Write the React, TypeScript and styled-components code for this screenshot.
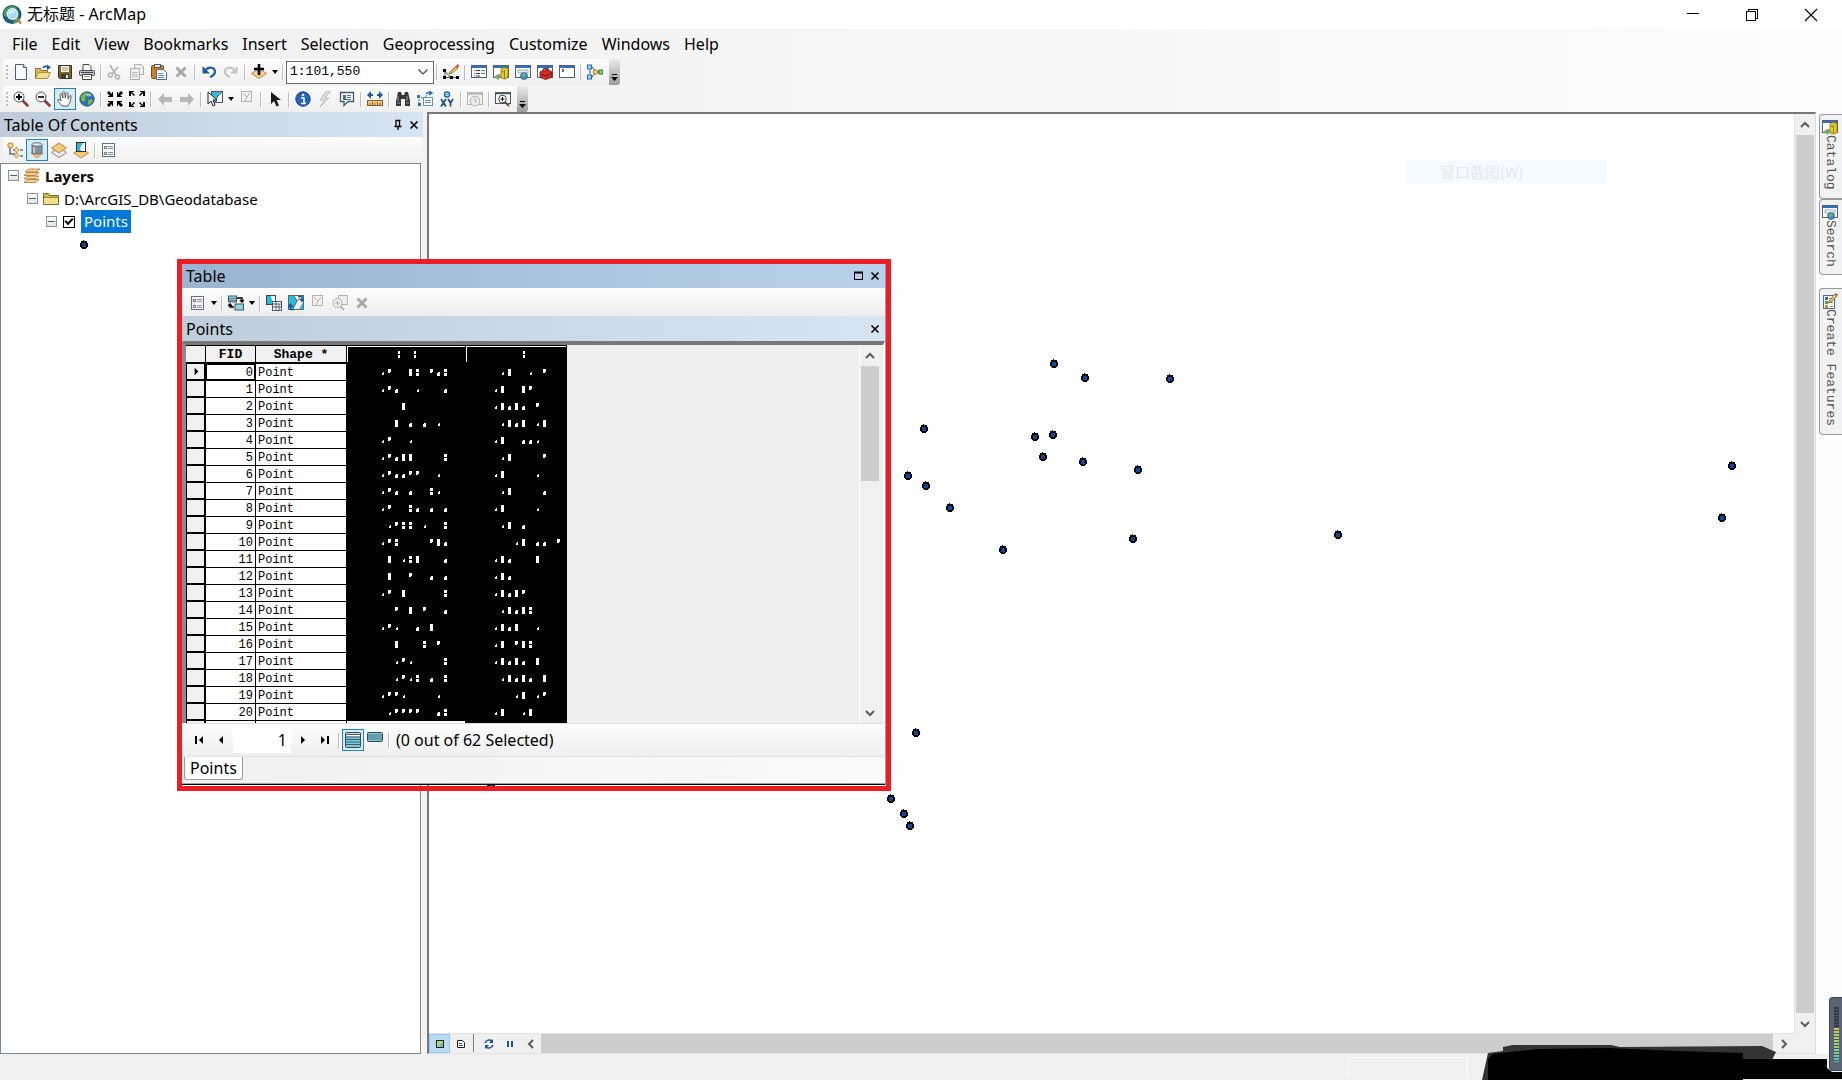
import React from 'react';
import styled, { createGlobalStyle, css } from 'styled-components';

const ui = '"Noto Sans", "Noto Sans CJK SC", sans-serif';
const mono = '"Liberation Mono", "Noto Sans CJK SC", monospace';

const GlobalStyle = createGlobalStyle`
  *, *::before, *::after { box-sizing: border-box; }
  body { margin: 0; font: 16px/20px ${ui}; color: #000; background: #f0f0f0; }
  button, input, select { font: inherit; color: inherit; margin: 0; padding: 0; border: 0; border-radius: 0; background: none; }
  svg { display: block; flex: none; }
`;

/* ---------- icons ---------- */

const windowFrame = (
  <>
    <rect x="0.5" y="1.5" width="15" height="12" fill="#fff" stroke="#56616d" />
    <rect x="1" y="2" width="14" height="2" fill="#2f6fc4" />
  </>
);
const cylinderCatalog = (
  <>
    {windowFrame}
    <path d="M8 5l3-1.500 4 1v9l-3 1.500-4-1z" fill="#e8cd24" stroke="#8a7410" strokeWidth=".8" />
    <path d="M11.500 6v9M9 7.500l2 .5" stroke="#8a7410" strokeWidth=".9" />
    <path d="M2 12.500l4-2.500 3 2-4 3.500z" fill="#5fa3c4" stroke="#c0a818" />
  </>
);
const searchWindow = (
  <>
    {windowFrame}
    <rect x="3" y="6" width="10" height="3" fill="#e8eef5" stroke="#8ba0b8" strokeWidth=".8" />
    <circle cx="9" cy="12" r="3.600" fill="#3e86cc" stroke="#35608c" strokeWidth=".6" />
    <path d="M7 11c1-2 3-2 4-1l-1 2-2 1-1 2z" fill="#6cbb52" />
  </>
);
const globe = (
  <>
    <circle cx="8" cy="8" r="7.200" fill="#2c6fb2" stroke="#174d80" strokeWidth=".8" />
    <path d="M2 6c2-5 6-5 8-4l-2 3-2 1 1 3-3 2-2-2zM9 9l4-1 1 2-3 4-2-1z" fill="#78b843" />
    <ellipse cx="10" cy="4" rx="2.500" ry="1.500" fill="#b9dbf3" opacity=".7" />
  </>
);
const diamond = (y: number, fill: string) => (
  <path d={`M0.500 ${y}L8 ${y - 5}L15.500 ${y}L8 ${y + 5}Z`} fill={fill} stroke="#b57f34" strokeWidth=".9" />
);
const magnifier = (sign: React.ReactNode) => (
  <>
    <path d="M9.500 9.500L14.500 14.500" stroke="#8d3b2c" strokeWidth="2.600" strokeLinecap="round" />
    <circle cx="6" cy="6" r="5" fill="#fbfbfb" stroke="#50565c" />
    {sign}
  </>
);

const icons: Record<string, React.ReactNode> = {
  new: <><path d="M2.500.5h8l3 3v12h-11z" fill="#f8fbff" stroke="#4c5d70" /><path d="M10.500.5v3h3" fill="#dbe6f2" stroke="#4c5d70" /></>,
  open: <><path d="M.5 13.500v-9h5l1 2h6v7z" fill="#d6b95c" stroke="#8c7430" /><path d="M.5 14.500l3-6h12l-3 6z" fill="#f4de91" stroke="#a98e40" /><path d="M8 4c1-2 3-2 5-1" fill="none" stroke="#1f5d9c" strokeWidth="1.600" /><path d="M12 .5l4 3-4 2.500z" fill="#1f5d9c" /></>,
  save: <><path d="M1.500 1.500h13v13h-12l-1-1z" fill="#7a662e" stroke="#3e3518" /><rect x="4" y="2" width="8" height="6" fill="#f2f0e8" /><path d="M5 4h6M5 6h6" stroke="#a09c8c" /><rect x="4" y="10" width="8" height="4" fill="#3a3a3a" /><rect x="9" y="11" width="2" height="3" fill="#eee" /></>,
  print: <><path d="M4 6V.5h6l2 2V6" fill="#fff" stroke="#444" /><rect x=".5" y="6.500" width="15" height="5" rx="1" fill="#c2c5c8" stroke="#4a4a4a" /><path d="M2 8.500h12" stroke="#46494c" /><path d="M3.500 10.500h9v5h-9z" fill="#fff" stroke="#444" /><path d="M5 12.500h6" stroke="#999" /></>,
  cut: <><path d="M3 1l6 10M11 3L5 10" stroke="#b5b5b5" strokeWidth="1.800" /><circle cx="3.500" cy="11" r="2" fill="none" stroke="#b0b0b0" strokeWidth="1.500" /><circle cx="10.500" cy="13" r="2" fill="none" stroke="#b0b0b0" strokeWidth="1.500" /></>,
  copy: <><path d="M5.500.5h7l2 2v8h-9z" fill="#f2f2f2" stroke="#adadad" /><path d="M1.500 4.500h7l2 2v9h-9z" fill="#f2f2f2" stroke="#adadad" /><path d="M3 8.500h6M3 10.500h6M3 12.500h6M8 4.500h4" stroke="#bbb" /></>,
  paste: <><rect x=".5" y="1.500" width="12" height="13" rx="1" fill="#c9812c" stroke="#7d4c16" /><rect x="3.500" y=".5" width="6" height="3" fill="#e8e8e8" stroke="#555" /><path d="M5.500 5.500h7l3 3v7h-10z" fill="#fff" stroke="#516983" /><path d="M7 9.500h5M7 11.500h6M7 13.500h6" stroke="#529abc" /></>,
  delete: <path d="M3.500 3.500l9 9M12.500 3.500l-9 9" stroke="#a8a8a8" strokeWidth="3" />,
  undo: <><path d="M4 7c3-5 10-4 10 1 0 3-3 4-5 5" fill="none" stroke="#1c5c9a" strokeWidth="2.200" /><path d="M1.500 2v7.500H9z" fill="#1c5c9a" /></>,
  redo: <><path d="M12 7C9 2 2 3 2 8c0 3 3 4 5 5" fill="none" stroke="#c6c6c6" strokeWidth="2.200" /><path d="M14.500 2v7.500H7z" fill="#c6c6c6" /></>,
  add: <>{diamond(9.500, '#f4cf87')}<path d="M8 0v11M3 5h10" stroke="#000" strokeWidth="2.600" /></>,
  edit: <><path d="M2 6v8M2 13.500h13M2 7l5 6" stroke="#555" fill="none" /><path d="M0 5h3v3H0zM0 12h3v3H0zM7 12h3v3H7zM13 12h3v3h-3z" fill="#000" /><path d="M7 8l6-6 2 2-6 5-3 1z" fill="#eebd57" stroke="#7d5c24" strokeWidth=".8" /><path d="M13 2l2-2 1 2-1 2z" fill="#c7423c" /></>,
  toc: <>{windowFrame}<path d="M3 6.500h1M3 9.500h1M3 12h1" stroke="#d33" /><path d="M5 6.500h4M5 9.500h4M5 12h4" stroke="#238" /><path d="M10 6.500h4M10 9.500h4" stroke="#29a6a6" /></>,
  catalog: cylinderCatalog,
  search: searchWindow,
  toolbox: <>{windowFrame}<path d="M3 8l7-3 5 3v5l-6 2.500-6-2z" fill="#d42a20" stroke="#7a1512" strokeWidth=".8" /><path d="M6 7V5l5-1v3M3.500 10l5.500 2 6-3" fill="none" stroke="#7a1512" /></>,
  python: <>{windowFrame}<path d="M3 5l2 1.500L3 8" fill="none" stroke="#000" /></>,
  model: <><path d="M3 6v4M5 3l4 5-4 5M8 8h4" fill="none" stroke="#444" /><rect x=".5" y="1" width="4" height="4" fill="#9fd3f5" stroke="#1e68aa" /><rect x=".5" y="11" width="4" height="4" fill="#9fd3f5" stroke="#1e68aa" /><circle cx="8.500" cy="8" r="2.200" fill="#f6db6c" stroke="#9c7d20" /><rect x="12" y="6" width="4" height="4" fill="#8cd17c" stroke="#2c7426" /></>,
  zoomIn: magnifier(<path d="M3 6h6M6 3v6" stroke="#000" strokeWidth="2" />),
  zoomOut: magnifier(<path d="M3 6h6" stroke="#333" strokeWidth="2" />),
  pan: <path d="M5 15l-4-5c-1-2 1-2 2-1l1 1-1-6c0-2 2-2 2 0l1 3-.2-5c0-2 2-2 2 0l.5 5 .7-4c.3-2 2-1.500 2 0v5l1.500-3c1-1 2 0 1.500 1L13 11l-2 4z" fill="#fff" stroke="#4e4e4e" strokeWidth=".9" />,
  globe,
  shrink: <path d="M1 1l1-1 3 3V1h1v5H1V5h2L0 2zM15 1l-1-1-3 3V1h-1v5h5V5h-2l3-3zM1 15l1 1 3-3v2h1v-5H1v1h2l-3 3zM15 15l-1 1-3-3v2h-1v-5h5v1h-2l3 3z" fill="#000" />,
  expand: <path d="M0 0h5v1H3l3 3-1 1-3-3v3H0zM16 0h-5v1h2l-3 3 1 1 3-3v3h2zM0 16h5v-1H3l3-3-1-1-3 3v-3H0zM16 16h-5v-1h2l-3-3 1-1 3 3v-3h2z" fill="#000" />,
  back: <path d="M1 8l6-6v4h8v5H7v4z" fill="#b9b9b9" />,
  forward: <path d="M15 8L9 2v4H1v5h8v4z" fill="#b9b9b9" />,
  selectFeat: <><rect x="4.500" y=".5" width="11" height="11" fill="#f4f4f4" stroke="#555" /><path d="M5 1h9l-5 6v4H5z" fill="#31b9de" /><path d="M9 11l1-5 5-5" fill="none" stroke="#555" /><path d="M1 1v12l3-3 2 5 2-1-2-5h4z" fill="#fff" stroke="#222" /></>,
  clearSel: <><rect x="2.500" y=".5" width="10" height="10" fill="#f1f1f1" stroke="#b4b4b4" /><path d="M4 2l4 4 3-4M8 6l-2 4" fill="none" stroke="#b4b4b4" /></>,
  arrow: <path d="M4 1v12l3-3 2.500 5.500 2.500-1L9.500 9H14z" fill="#1a1a1a" />,
  info: <><circle cx="8" cy="8" r="7.200" fill="#2464be" stroke="#153f7a" /><path d="M6 7h3v5M6 12.500h5" stroke="#fff" strokeWidth="1.500" fill="none" /><circle cx="8" cy="4" r="1.300" fill="#fff" /></>,
  bolt: <path d="M9 0L3 9h4l-4 7 9-9H8l6-7z" fill="#dcdcdc" stroke="#b5b5b5" strokeWidth=".8" />,
  popup: <><path d="M1.500 1.500h13v9H9l-4 4v-4H1.500z" fill="#fff" stroke="#47586b" strokeWidth="1.300" /><rect x="4" y="4" width="3" height="4" fill="#2e79bd" /><path d="M8 4.500h4M8 6.500h4M4 8.500h8" stroke="#47709c" /></>,
  measure: <><path d="M1 4h5M10 4h5" stroke="#1c5c9a" strokeWidth="2" /><path d="M4 0L0 4l4 4zM12 0l4 4-4 4z" fill="#1c5c9a" /><rect x=".5" y="9.500" width="15" height="5" fill="#f0cd7c" stroke="#8b5c28" /><path d="M3 12v2M5.500 11v3M8 12v2M10.500 11v3M13 12v2" stroke="#8b5c28" /></>,
  binoculars: <><path d="M3 1h3l1 3h2l1-3h3l2 9v5h-5V8H6v7H1v-5z" fill="#383838" /><path d="M3 5v5M12 5v5M2 12h3M11 12h3" stroke="#9a9a9a" /></>,
  route: <><path d="M2 13V6l5 2 4-6" fill="none" stroke="#2773b3" strokeDasharray="2 1" /><path d="M9 2h5M12 0l3 2-3 2" fill="none" stroke="#2773b3" strokeWidth="1.500" /><rect x="6.500" y="6.500" width="9" height="8" fill="#fff" stroke="#6a8fae" /><path d="M8 9.500h6M8 11.500h6" stroke="#6a8fae" /><path d="M0 4h3v3H0zM1 12h3v3H1z" fill="#2773b3" /></>,
  xy: <><circle cx="8" cy="3.500" r="2.500" fill="none" stroke="#1c6fb5" strokeWidth="1.600" /><circle cx="8" cy="3.500" r=".8" fill="#1c6fb5" /><path d="M2 8l5 7.500M7 8l-5 7.500M9 8l2.500 4V15.500M14 8l-2.500 4" fill="none" stroke="#174f88" strokeWidth="1.700" /></>,
  time: <><rect x=".5" y="1.500" width="15" height="12" fill="#f3f3f3" stroke="#b5b5b5" /><path d="M1 3h14" stroke="#c0c0c0" strokeWidth="2" /><circle cx="8" cy="10" r="4.800" fill="#ececec" stroke="#b0b0b0" /><path d="M8 7v3l2 1" fill="none" stroke="#a8a8a8" /></>,
  viewer: <><rect x=".5" y="1.500" width="15" height="11" fill="#fff" stroke="#4a5663" /><path d="M1 2.500h14" stroke="#4a5663" strokeWidth="1.500" /><path d="M9 10l5 5" stroke="#8d3b2c" strokeWidth="2" /><circle cx="7.500" cy="8" r="3.800" fill="#fff" stroke="#444" /><path d="M5.500 8h4M7.500 6v4" stroke="#000" /></>,
  drawingOrder: <><path d="M3 5v7h5M6 8h2M13 8h3M13 14h3" stroke="#4a779c" fill="none" strokeWidth="1.500" /><circle cx="3.500" cy="3.500" r="2.700" fill="#f3cf88" stroke="#b57f34" /><path d="M9.500 5l2.500 3-2.500 3L7 8zM9.500 11l2.500 2.500L9.500 16 7 13.500z" fill="#f3cf88" stroke="#b57f34" strokeWidth=".8" /></>,
  source: <><path d="M2 11h12l-6 5z" fill="#f1c777" stroke="#b57f34" strokeWidth=".8" /><path d="M3 2.500v8c0 2 10 2 10 0v-8z" fill="#87919d" stroke="#46566a" strokeWidth=".8" /><ellipse cx="8" cy="2.500" rx="5" ry="1.800" fill="#dde6ee" stroke="#46566a" strokeWidth=".8" /><path d="M5 5v6" stroke="#d7dde3" strokeWidth="1.500" /></>,
  visibility: <><path d="M.5 10.500L8 5.500l7.500 5L8 15.500z" fill="#eee" stroke="#777" strokeWidth=".9" />{diamond(6, '#f3c97c')}</>,
  selection: <><path d="M.5 11L8 6l7.500 5L8 16z" fill="#f3c97c" stroke="#b57f34" strokeWidth=".8" /><rect x="3.500" y=".5" width="9" height="9" fill="#fff" stroke="#333" /><path d="M4 1h6L7 6l1 3H4z" fill="#29b7df" /></>,
  list: <><rect x="1.500" y="1.500" width="12" height="13" fill="#fff" stroke="#5f7185" /><path d="M7 4.500h5M7 6.500h5M7 10.500h5M7 12.500h5" stroke="#8090a3" /><circle cx="4.500" cy="5.500" r="1.200" fill="none" stroke="#333" /><circle cx="4.500" cy="11.500" r="1.200" fill="none" stroke="#333" /></>,
  layers: <><path d="M0 14.500l4-3h11l-4 3z" fill="#f6d395" stroke="#a87531" strokeWidth=".8" /><path d="M0 11l4-3h11l-4 3z" fill="#f6d395" stroke="#a87531" strokeWidth=".8" /><path d="M0 7.500l4-3h11l-4 3z" fill="#f6d395" stroke="#a87531" strokeWidth=".8" /><path d="M1 4l4-3h11l-4 3z" fill="#f6d395" stroke="#a87531" strokeWidth=".8" /></>,
  folder: <><path d="M.5 13.500v-11h5l1 2h9v9z" fill="#cdb44c" stroke="#7d6c22" /><path d="M1 6.500h14v6.500H1z" fill="#f1e08c" /><path d="M1 6.500h14" stroke="#9c8a36" /></>,
  related: <><rect x=".5" y="1" width="8" height="6" fill="#8ad6e4" stroke="#45525e" /><path d="M1 3.500h7M1 5.500h7M7 11.500h8M7 13.500h8" stroke="#45525e" strokeWidth=".7" /><rect x="7" y="9" width="8.500" height="6" fill="#8ad6e4" stroke="#45525e" /><path d="M9 3h5v4M12 5l2 2 2-2M6 12H2V9M0 11l2-2 2 2" fill="none" stroke="#000" strokeWidth="1.400" /></>,
  selAttr: <><rect x=".5" y=".5" width="9" height="9" fill="#fff" stroke="#444" /><path d="M1 1h4l2 8H1z" fill="#23b8de" /><rect x="6.500" y="6.500" width="9" height="9" fill="#fff" stroke="#4e5a66" /><path d="M7 9h8M7 12h8M10 7v8M13 9v6" stroke="#4e5a66" /></>,
  switchSel: <><rect x=".5" y=".5" width="15" height="14" fill="#f1f1f1" stroke="#666" /><path d="M1 1h5l3 5-4 8H1zM15 7v7h-4z" fill="#24bde4" /><path d="M6 1l3 5 3-3M9 6l-4 8" fill="none" stroke="#666" /><path d="M10 1.500h4v4M12 4l2 2 2-2M6 14.500H2.500V10M0 12l2.500-2.500L5 12" fill="none" stroke="#17579a" strokeWidth="1.600" /></>,
  zoomSel: <><rect x="6.500" y=".5" width="9" height="9" fill="#eee" stroke="#b4b4b4" /><path d="M8 11l4 4" stroke="#b4b4b4" strokeWidth="2" /><circle cx="5.500" cy="8" r="4.500" fill="#f4f4f4" stroke="#acacac" /><path d="M3 8h5M5.500 5.500v5" stroke="#aaa" /></>,
  createFeat: <><rect x="1.500" y="2.500" width="11" height="13" fill="#fff" stroke="#4b6c8c" /><path d="M3 4h3v3H3z" fill="#2878bd" /><path d="M3 8h3v3H3z" fill="#5ba345" /><path d="M3 12h3v3H3z" fill="#d38a2a" /><path d="M7 5.500h3M8 9.500h3M8 13.500h3" stroke="#888" /><path d="M7 8l6-7 2 2-6 6-3 1z" fill="#f1c565" stroke="#7d5c24" strokeWidth=".8" /><path d="M13 1l1-1 2 2-1 1z" fill="#d3443e" /></>,
  showAll: <><rect x=".5" y=".5" width="15" height="15" rx="1" fill="#72cfe0" stroke="#444" /><path d="M1 3h14" stroke="#fff" strokeWidth="3" /><path d="M1 2.500h14M1 5h14M1 7.500h14M1 10h14M1 12.500h14" stroke="#4a5a62" /></>,
  showSel: <><rect x=".5" y=".5" width="15" height="9" rx="1" fill="#72cfe0" stroke="#444" /><path d="M1 3h14M1 5h14M1 7h14" stroke="#4a5a62" strokeWidth=".8" /></>,
  dataView: <><rect x="4.500" y="4.500" width="7" height="7" fill="#b6d87a" stroke="#222" /><path d="M7 11l1-3 3-1v4z" fill="#7fb5ae" /></>,
  layoutView: <><path d="M4.500 4.500h5l2 2v5h-7z" fill="#fff" stroke="#222" /><path d="M6 7h3v1H6zM6 9h4v1H6z" fill="#2a6cb0" /></>,
  refresh: <><path d="M4 7c1-3 5-4 7-2M12 9c-1 3-5 4-7 2" fill="none" stroke="#174f88" strokeWidth="1.500" /><path d="M12 3v4H8zM4 13V9h4z" fill="#174f88" /></>,
  pause: <path d="M5 5h2v6H5zM9 5h2v6H9z" fill="#16529c" />,
  first: <path d="M4 4h2v8H4zM12 4v8L8 8z" fill="#000" />,
  prev: <path d="M10 4v8L6 8z" fill="#000" />,
  next: <path d="M6 4v8l4-4z" fill="#000" />,
  last: <path d="M10 4h2v8h-2zM4 4v8l4-4z" fill="#000" />,
  pin: <path d="M5.500 3.500h5M6 3v6M9.500 3v6M4.500 9.500h7M8 9.500V13" stroke="#000" strokeWidth="1.300" fill="none" />,
  close: <path d="M4.500 4.500l7 7M11.500 4.500l-7 7" stroke="#000" strokeWidth="1.600" />,
  box: <><rect x="3.500" y="4.500" width="8" height="7" fill="none" stroke="#000" /><path d="M3 4.500h9" stroke="#000" strokeWidth="2" /></>,
  up: <path d="M4 10l4-4 4 4" fill="none" stroke="#5c5c5c" strokeWidth="2" />,
  down: <path d="M4 6l4 4 4-4" fill="none" stroke="#5c5c5c" strokeWidth="2" />,
  left: <path d="M10 4L6 8l4 4" fill="none" stroke="#5c5c5c" strokeWidth="2" />,
  right: <path d="M6 4l4 4-4 4" fill="none" stroke="#5c5c5c" strokeWidth="2" />,
  winMin: <path d="M2 6.500h12" stroke="#000" shapeRendering="crispEdges" />,
  winRestore: <path d="M2.500 4.500h9v9h-9zM4.500 4.500v-2h9v9h-2" fill="none" stroke="#000" shapeRendering="crispEdges" />,
  winClose: <path d="M2 2l12 12M14 2L2 14" stroke="#000" strokeWidth="1.100" />,
};

const Icon = ({ name, size = 16 }: { name: string; size?: number }) => (
  <svg width={size} height={size} viewBox="0 0 16 16" aria-hidden="true">{icons[name]}</svg>
);

/* ---------- shared parts ---------- */

const Tool = styled.button<{ $active?: boolean }>`
  width: 22px;
  height: 22px;
  flex: none;
  display: flex;
  align-items: center;
  justify-content: center;
  ${p => p.$active && css`
    background: #d9eaf8;
    box-shadow: inset 0 0 0 1px #1a84d8;
  `}
`;
const Divider = styled.span`
  width: 2px;
  height: 15px;
  margin: 0 2px;
  flex: none;
  border-left: 1px solid #bdbdbd;
  border-right: 1px solid #fff;
`;
const DropButton = styled.button`
  width: 10px;
  height: 22px;
  flex: none;
  display: flex;
  align-items: center;
  justify-content: center;
  &::before { content: ''; border: 3px solid transparent; border-top: 4px solid #000; border-bottom: 0; }
`;
const Grip = styled.span`
  width: 2px;
  height: 14px;
  margin: 0 2px 0 3px;
  flex: none;
  background: repeating-linear-gradient(#bdbdbd 0 2px, transparent 2px 4px);
`;

const Tools = ({ items, active }: { items: string[]; active?: string }) => (
  <>
    {items.map((item, i) =>
      item === '|' ? <Divider key={i} />
        : item === 'v' ? <DropButton key={i} aria-label="More options" />
          : <Tool key={i} $active={item === active} aria-label={item}><Icon name={item} /></Tool>
    )}
  </>
);

/* ---------- frame ---------- */

const Shell = styled.div`
  position: relative;
  height: 100vh;
  min-height: 640px;
  display: flex;
  flex-direction: column;
  overflow: hidden;
  background: linear-gradient(90deg, #f0f0f0, #fcfcfc);
`;
const TitleBar = styled.header`
  height: 29px;
  flex: none;
  display: flex;
  align-items: center;
  padding: 0 2px;
  background: #fff;
`;
const AppTitle = styled.h1`
  margin: 0 0 2px 5px;
  flex: 1;
  font: 400 16px/20px ${ui};
`;
const WindowButton = styled.button`
  width: 59px;
  height: 29px;
  display: flex;
  align-items: center;
  justify-content: center;
`;
const MenuBar = styled.nav`
  height: 30px;
  flex: none;
  display: flex;
  align-items: center;
  padding-left: 5px;
`;
const MenuItem = styled.button`
  padding: 0 7px;
  line-height: 24px;
`;
const ToolArea = styled.div`
  flex: none;
  display: flex;
  flex-direction: column;
  gap: 1px;
`;
const ToolStrip = styled.div`
  height: 26px;
  display: flex;
`;
const ToolGroup = styled.div`
  height: 26px;
  display: flex;
  align-items: center;
  margin-left: 3px;
  padding-right: 3px;
  border-radius: 3px 0 0 3px;
  background: linear-gradient(#fcfcfc, #efefef);
`;
const Overflow = styled.button`
  width: 11px;
  height: 26px;
  display: flex;
  align-items: flex-end;
  justify-content: center;
  padding-bottom: 3px;
  border-radius: 0 3px 3px 0;
  background: linear-gradient(#ececec, #9b9b9b);
`;
const ScaleField = styled.label`
  width: 148px;
  height: 23px;
  display: flex;
  align-items: center;
  padding-right: 4px;
  border: 1px solid #6e6e6e;
  background: #fff;
`;
const ScaleSelect = styled.select`
  appearance: none;
  flex: 1;
  min-width: 0;
  padding-left: 3px;
  font: 13px/20px ${mono};
  outline: 0;
`;
const Body = styled.div`
  flex: 1;
  min-height: 0;
  display: flex;
`;

/* ---------- contents panel ---------- */

const Contents = styled.aside`
  width: 423px;
  flex: none;
  display: flex;
  flex-direction: column;
`;
const CaptionBar = styled.div<{ $strong?: boolean; $flush?: boolean }>`
  height: ${p => (p.$strong ? 24 : 25)}px;
  flex: none;
  display: flex;
  align-items: center;
  padding: 0 ${p => (p.$flush ? 1 : 2)}px 0 4px;
  background: ${p => (p.$strong
    ? 'linear-gradient(90deg, #9ab4d1, #b9d1ea)'
    : 'linear-gradient(90deg, #bfcddb, #d7e4f2)')};
`;
const Caption = styled.h2`
  margin: 0;
  flex: 1;
  font: 400 16px/20px ${ui};
`;
const CaptionButton = styled.button`
  width: 16px;
  height: 16px;
`;
const PanelTools = styled.div`
  height: 26px;
  flex: none;
  display: flex;
  align-items: center;
  margin: 0 1px 0 3px;
  padding-left: 1px;
  background: linear-gradient(#fcfcfc, #efefef);
`;
const Tree = styled.ul`
  flex: 1;
  margin: 0 2px 0 0;
  padding: 0;
  list-style: none;
  border: 1px solid #828790;
  background: #fff;
`;
const TreeRow = styled.li<{ $level: number }>`
  height: 23px;
  display: flex;
  align-items: center;
  gap: 5px;
  padding-left: ${p => 7 + p.$level * 19}px;
  font-size: 15px;
  font-weight: ${p => (p.$level === 0 ? 700 : 400)};
`;
const Toggle = styled.button`
  width: 11px;
  height: 11px;
  flex: none;
  display: flex;
  align-items: center;
  justify-content: center;
  border: 1px solid #919191;
  background: linear-gradient(#fff, #e4e4e4);
  &::before { content: ''; width: 7px; height: 1px; background: #3f5fa8; }
`;
const Check = styled.input`
  appearance: none;
  width: 12px;
  height: 12px;
  margin: 0 1px;
  flex: none;
  display: flex;
  align-items: center;
  justify-content: center;
  border: 1px solid #000;
  background: #fff;
  &:checked::before {
    content: '';
    width: 8px;
    height: 5px;
    margin-bottom: 2px;
    border: solid #000;
    border-width: 0 0 2px 2px;
    transform: rotate(-45deg);
  }
`;
const LayerName = styled.label`
  padding: 0 3px;
  line-height: 23px;
  color: #fff;
  background: #0078d7;
`;
const SymbolSlot = styled.span`
  padding-left: 15px;
`;

const PointMark = () => (
  <svg width="8" height="9" viewBox="0 0 8 9" shapeRendering="crispEdges" aria-hidden="true">
    <path d="M3 0h1v1h3v2h1v4H7v1H6v1H2V8H1V7H0V3h1V1h2z" fill="#000" />
    <path d="M2 3h4v4H2z" fill="#0b4a9c" />
  </svg>
);

/* ---------- map ---------- */

const MapPane = styled.main`
  flex: 1;
  min-width: 0;
  margin: 0 3px 0 4px;
  display: flex;
  flex-direction: column;
  border-style: solid;
  border-width: 2px 1px 1px 2px;
  border-color: #777 #dcdcdc #e2e2e2 #777;
  background: #f0f0f0;
`;
const MapRow = styled.div`
  flex: 1;
  min-height: 0;
  display: flex;
`;
const Canvas = styled.div`
  position: relative;
  flex: 1;
  overflow: hidden;
  border: solid #e2e2e2;
  border-width: 0 1px 1px 0;
  background: #fefefe;
`;
const Pin = styled.span<{ $x: number; $y: number }>`
  position: absolute;
  left: ${p => p.$x - 433}px;
  top: ${p => p.$y - 119}px;
`;
const GhostItem = styled.div`
  position: absolute;
  left: 977px;
  top: 46px;
  width: 200px;
  padding: 2px 0 2px 34px;
  color: #e6e8ea;
  background: #f5fbff;
  font: 15px/20px "Noto Sans CJK SC", sans-serif;
`;
const VScroll = styled.div`
  width: 20px;
  flex: none;
  display: flex;
  flex-direction: column;
  padding: 0 1px;
  background: #f0f0f0;
`;
const ScrollButton = styled.button`
  width: 18px;
  height: 21px;
  flex: none;
  display: flex;
  align-items: center;
  justify-content: center;
`;
const Thumb = styled.div<{ $size?: number }>`
  flex: ${p => (p.$size ? 'none' : 1)};
  height: ${p => (p.$size ? p.$size + 'px' : 'auto')};
  background: #cdcdcd;
`;
const Filler = styled.span`
  flex: 1;
`;
const MapBar = styled.div`
  height: 19px;
  flex: none;
  display: flex;
  align-items: stretch;
  padding-right: 21px;
`;
const ViewButton = styled.button<{ $active?: boolean }>`
  width: 21px;
  flex: none;
  display: flex;
  align-items: center;
  justify-content: center;
  background: ${p => (p.$active ? '#bcdcf4' : 'transparent')};
  box-shadow: ${p => (p.$active ? 'inset 0 0 0 1px #90c8f6' : 'none')};
`;
const BarRule = styled.span`
  width: 1px;
  margin: 0 4px 1px 2px;
  background: #808080;
`;

/* ---------- dock ---------- */

const Dock = styled.div`
  width: 23px;
  flex: none;
  display: flex;
  flex-direction: column;
  padding-top: 2px;
`;
const DockTab = styled.button<{ $apart?: boolean }>`
  display: flex;
  flex-direction: column;
  align-items: flex-start;
  padding: 4px 0 8px 2px;
  margin-top: ${p => (p.$apart ? 13 : 0)}px;
  border: 1px solid #989898;
  border-right: 0;
  border-radius: 4px 0 0 4px;
  background: #f2f2f2;
  color: #555;
`;
const DockLabel = styled.span`
  writing-mode: vertical-rl;
  font: 13px/16px ${mono};
  white-space: nowrap;
`;
const StatusBar = styled.footer`
  height: 26px;
  flex: none;
  display: flex;
  justify-content: flex-end;
  padding: 3px 374px 2px 0;
  background: #f0f0f0;
`;
const StatusPane = styled.span`
  width: 120px;
  border: solid #f8f8f8;
  border-width: 1px 2px 0 1px;
`;

/* ---------- attribute table window ---------- */

const TableWindow = styled.section`
  position: absolute;
  left: 177px;
  top: 259px;
  width: 714px;
  height: 532px;
  display: flex;
  flex-direction: column;
  padding: 0 1px 1px 0;
  border: 5px solid #ee1c25;
  background: linear-gradient(#9c9c9c, #9c9c9c) right top / 1px calc(100% - 1px) no-repeat;
`;
const TableTools = styled.div`
  height: 28px;
  flex: none;
  display: flex;
  align-items: center;
  padding: 2px 0 0 5px;
  background: linear-gradient(#fdfdfd, #ededed);
`;
const GridFrame = styled.div`
  flex: 1;
  min-height: 0;
  display: flex;
  padding-right: 3px;
  border-style: solid;
  border-width: 4px 2px 0 4px;
  border-color: #777 #fff #fff #8c8c8c;
  background: #efefef;
`;
const GridArea = styled.div`
  flex: 1;
  min-width: 0;
  overflow: hidden;
  border-right: 1px solid #fff;
`;
const Grid = styled.table`
  width: 381px;
  table-layout: fixed;
  border-collapse: separate;
  border-spacing: 0;
  font: 12px/14px ${mono};
  background: #fff;
`;
const HeadCell = styled.th<{ $w: number; $dark?: boolean }>`
  width: ${p => p.$w}px;
  height: 19px;
  padding: ${p => (p.$dark ? 0 : '2px 0 0')};
  font: 700 13px/14px ${mono};
  border: solid #000;
  border-width: 1px 1px 2px 0;
  background: ${p => (p.$dark ? '#000' : '#f0f0f0')};
  box-shadow: ${p => (p.$dark ? 'inset 1px 1px #fff' : 'none')};
`;
const RowHead = styled.td`
  height: 17px;
  padding: 0 0 0 2px;
  border: solid #000;
  border-width: 0 2px 2px 1px;
  background: #f0f0f0;
`;
const Cell = styled.td<{ $right?: boolean; $focus?: boolean }>`
  height: 17px;
  padding: 2px 2px 0;
  text-align: ${p => (p.$right ? 'right' : 'left')};
  border: solid #000;
  border-width: 0 1px 1px 0;
  box-shadow: ${p => (p.$focus ? 'inset 0 0 0 1px #000' : 'none')};
`;
const DarkCell = styled.td`
  height: 17px;
  padding: 0;
  background: #000;
`;
const NavBar = styled.div`
  height: 33px;
  flex: none;
  display: flex;
  align-items: center;
  padding-left: 6px;
  border-top: 1px solid #e0e0e0;
  background: linear-gradient(#fcfcfc, #efefef);
`;
const RecordInput = styled.input`
  width: 58px;
  height: 25px;
  margin: 0 1px;
  padding-right: 4px;
  text-align: right;
  background: #fff;
`;
const SelectedCount = styled.span`
  padding-left: 4px;
`;
const TabRow = styled.div`
  height: 29px;
  flex: none;
  display: flex;
  align-items: flex-start;
  padding-left: 2px;
  background: linear-gradient(90deg, #f0f0f0, #fafafa);
  border-top: 1px solid #e0e0e0;
  border-bottom: 1px solid #000;
  box-shadow: inset 0 -1px #a0a0a0;
`;
const SheetTab = styled.button`
  padding: 0 5px;
  line-height: 22px;
  border: 1px solid #999;
  border-top: 0;
  border-radius: 0 0 3px 3px;
  background: #fff;
`;

/* Bare traces left in the blacked-out columns, one per character slot. */
const traceShapes: Record<string, string> = {
  '4': 'M1 4h1v-1h1v3h-2z',
  '9': 'M0 0h3v3h-1v1h-2z',
  '6': 'M0 4h1v-1h2v4h-3z',
  '0': 'M0 0h3v7h-3z',
  '8': 'M0 0h3v3h-3zM0 4h3v3h-3z',
};
const Traces = ({ code, x, width }: { code: string; x: number; width: number }) => (
  <svg width={width} height="17" shapeRendering="crispEdges" aria-hidden="true">
    {code.split('').map((c, i) => traceShapes[c] && (
      <path key={i} d={traceShapes[c]} fill="#fff" transform={`translate(${x + i * 7} 5)`} />
    ))}
  </svg>
);
const HeadTraces = ({ at, width }: { at: number[]; width: number }) => (
  <svg width={width} height="16" shapeRendering="crispEdges" aria-hidden="true">
    {at.map(x => <path key={x} d={`M${x} 5h2v3h-2zM${x} 9h2v3h-2z`} fill="#fff" />)}
  </svg>
);

const records: [string, string][] = [
  ['49__08_968', '_40__4_9'], ['496__4___6', '40__09'], ['___0', '40606_9'],
  ['__0_6_6_4', '_4060_40'], ['49__4', '40__664'], ['49600____8', '_40____9'],
  ['496699__4', '40____4'], ['496_6__84', '_40____6'], ['49__86_6_6', '40____4'],
  ['_4988_4__8', '_40_6'], ['498____906', '___40_66_9'], ['_0_480___6', '406___0'],
  ['_0__9__6_6', '406'], ['49_0_____8', '40609'], ['__9_0_9__6', '_40608'],
  ['494__6_0', '4060__4'], ['__0___8_9', '40_908'], ['__494____8', '40606_0'],
  ['__4948_6_8', '_40606_0'], ['4994____4', '___40_49'], ['_49999__68', '40__40'],
];

const pins: [number, number][] = [
  [1054, 364], [1085, 378], [1170, 379], [924, 429], [1035, 437], [1053, 435], [1043, 457],
  [1083, 462], [1138, 470], [908, 476], [926, 486], [950, 508], [1003, 550], [1133, 539],
  [1338, 535], [1732, 466], [1722, 518], [916, 733], [891, 799], [904, 814], [910, 826], [491, 784],
];

const menus = ['File', 'Edit', 'View', 'Bookmarks', 'Insert', 'Selection', 'Geoprocessing', 'Customize', 'Windows', 'Help'];

/* ---------- overlays ---------- */

const Scribble = styled.svg`
  position: absolute;
  right: 0;
  bottom: 0;
`;
const Meter = styled.div`
  position: absolute;
  right: 0;
  bottom: 9px;
  width: 13px;
  height: 74px;
  padding: 9px 3px 8px 4px;
  border: 1px solid #3d4453;
  border-right: 0;
  border-radius: 4px 0 0 4px;
  background: #5b6374;
`;
const MeterScale = styled.div`
  height: 100%;
  background:
    repeating-linear-gradient(transparent 0 2px, #4b5262 2px 3px),
    linear-gradient(#353b48 0 38%, #dcc45a 39%, #a8d85c 60%, #4fc8b4);
`;

const AppLogo = () => (
  <svg width="20" height="20" viewBox="0 0 20 20" aria-hidden="true">
    <circle cx="10" cy="9.500" r="9.500" fill="#1d5f7c" />
    <path d="M2 6c3-5 9-6 13-3l-3 3-4 1-2 5-4-1zM12 15l5-3-2 5-4 2z" fill="#4e9c62" />
    <path d="M14 13l5 5.500" stroke="#c57b42" strokeWidth="2.500" />
    <circle cx="10.500" cy="9" r="5.200" fill="#a5dcf3" stroke="#e6eef2" strokeWidth="1.400" />
    <path d="M7.500 9c1-3 3-3 5-2" fill="none" stroke="#fff" strokeWidth="1.200" />
  </svg>
);

const OverflowMark = () => (
  <svg width="7" height="8" viewBox="0 0 7 8" aria-hidden="true">
    <path d="M1 .5h5" stroke="#000" />
    <path d="M0 3h7L3.500 7z" fill="#000" />
  </svg>
);

export default function App() {
  return (
    <Shell>
      <GlobalStyle />
      <TitleBar>
        <AppLogo />
        <AppTitle>无标题 - ArcMap</AppTitle>
        <WindowButton aria-label="Minimize"><Icon name="winMin" /></WindowButton>
        <WindowButton aria-label="Restore"><Icon name="winRestore" /></WindowButton>
        <WindowButton aria-label="Close"><Icon name="winClose" /></WindowButton>
      </TitleBar>
      <MenuBar>{menus.map(m => <MenuItem key={m}>{m}</MenuItem>)}</MenuBar>
      <ToolArea>
        <ToolStrip>
          <ToolGroup>
            <Grip />
            <Tools items={['new', 'open', 'save', 'print', '|', 'cut', 'copy', 'paste', 'delete', '|', 'undo', 'redo', '|', 'add', 'v', '|']} />
            <ScaleField>
              <ScaleSelect aria-label="Map scale" defaultValue="1:101,550">
                <option>1:101,550</option>
              </ScaleSelect>
              <svg width="12" height="8" viewBox="0 0 12 8" aria-hidden="true">
                <path d="M1.500 1.500l4.500 4.500 4.500-4.500" fill="none" stroke="#444" strokeWidth="1.200" />
              </svg>
            </ScaleField>
            <Tools items={['|', 'edit', '|', 'toc', 'catalog', 'search', 'toolbox', 'python', '|', 'model']} />
          </ToolGroup>
          <Overflow aria-label="Standard toolbar options"><OverflowMark /></Overflow>
        </ToolStrip>
        <ToolStrip>
          <ToolGroup>
            <Grip />
            <Tools
              active="pan"
              items={['zoomIn', 'zoomOut', 'pan', 'globe', '|', 'shrink', 'expand', '|', 'back', 'forward', '|', 'selectFeat', 'v', 'clearSel', '|', 'arrow', '|', 'info', 'bolt', 'popup', '|', 'measure', '|', 'binoculars', 'route', 'xy', '|', 'time', '|', 'viewer']}
            />
          </ToolGroup>
          <Overflow aria-label="Tools toolbar options"><OverflowMark /></Overflow>
        </ToolStrip>
      </ToolArea>

      <Body>
        <Contents>
          <CaptionBar $flush>
            <Caption>Table Of Contents</Caption>
            <CaptionButton aria-label="Auto hide"><Icon name="pin" /></CaptionButton>
            <CaptionButton aria-label="Close panel"><Icon name="close" /></CaptionButton>
          </CaptionBar>
          <PanelTools>
            <Tools active="source" items={['drawingOrder', 'source', 'visibility', 'selection', '|', 'list']} />
          </PanelTools>
          <Tree>
            <TreeRow $level={0}><Toggle aria-label="Collapse Layers" /><Icon name="layers" />Layers</TreeRow>
            <TreeRow $level={1}><Toggle aria-label="Collapse geodatabase" /><Icon name="folder" />D:\ArcGIS_DB\Geodatabase</TreeRow>
            <TreeRow $level={2}>
              <Toggle aria-label="Collapse Points" />
              <Check type="checkbox" id="layer-points" defaultChecked />
              <LayerName htmlFor="layer-points">Points</LayerName>
            </TreeRow>
            <TreeRow $level={3}><SymbolSlot><PointMark /></SymbolSlot></TreeRow>
          </Tree>
        </Contents>

        <MapPane>
          <MapRow>
            <Canvas>
              {pins.map(([x, y]) => <Pin key={`${x}-${y}`} $x={x} $y={y}><PointMark /></Pin>)}
              <GhostItem>窗口截图(W)</GhostItem>
            </Canvas>
            <VScroll>
              <ScrollButton aria-label="Scroll up"><Icon name="up" /></ScrollButton>
              <Thumb />
              <ScrollButton aria-label="Scroll down"><Icon name="down" /></ScrollButton>
            </VScroll>
          </MapRow>
          <MapBar>
            <ViewButton $active aria-label="Data view"><Icon name="dataView" /></ViewButton>
            <ViewButton aria-label="Layout view"><Icon name="layoutView" /></ViewButton>
            <BarRule />
            <ViewButton aria-label="Refresh"><Icon name="refresh" /></ViewButton>
            <ViewButton aria-label="Pause drawing"><Icon name="pause" /></ViewButton>
            <ViewButton aria-label="Scroll left"><Icon name="left" /></ViewButton>
            <Thumb />
            <ViewButton aria-label="Scroll right"><Icon name="right" /></ViewButton>
          </MapBar>
        </MapPane>

        <Dock>
          <DockTab><Icon name="catalog" /><DockLabel>Catalog</DockLabel></DockTab>
          <DockTab><Icon name="search" /><DockLabel>Search</DockLabel></DockTab>
          <DockTab $apart><Icon name="createFeat" /><DockLabel>Create Features</DockLabel></DockTab>
        </Dock>
      </Body>
      <StatusBar><StatusPane /></StatusBar>

      <TableWindow>
        <CaptionBar $strong>
          <Caption>Table</Caption>
          <CaptionButton aria-label="Maximize"><Icon name="box" /></CaptionButton>
          <CaptionButton aria-label="Close table"><Icon name="close" /></CaptionButton>
        </CaptionBar>
        <TableTools>
          <Tools items={['list', 'v', '|', 'related', 'v', '|', 'selAttr', 'switchSel', 'clearSel', 'zoomSel', 'delete']} />
        </TableTools>
        <CaptionBar>
          <Caption>Points</Caption>
          <CaptionButton aria-label="Close Points"><Icon name="close" /></CaptionButton>
        </CaptionBar>
        <GridFrame>
          <GridArea>
            <Grid>
              <thead>
                <tr>
                  <HeadCell $w={20} />
                  <HeadCell $w={50} scope="col">FID</HeadCell>
                  <HeadCell $w={91} scope="col">Shape *</HeadCell>
                  <HeadCell $w={119} $dark><HeadTraces at={[51, 67]} width={118} /></HeadCell>
                  <HeadCell $w={101} $dark><HeadTraces at={[57]} width={100} /></HeadCell>
                </tr>
              </thead>
              <tbody>
                {records.map(([a, b], i) => (
                  <tr key={i}>
                    <RowHead>{i === 0 && <Icon name="next" size={15} />}</RowHead>
                    <Cell $right $focus={i === 0}>{i}</Cell>
                    <Cell>Point</Cell>
                    <DarkCell><Traces code={a} x={34} width={119} /></DarkCell>
                    <DarkCell><Traces code={b} x={28} width={101} /></DarkCell>
                  </tr>
                ))}
                <tr>
                  <RowHead />
                  <Cell />
                  <Cell />
                  <Cell />
                  <DarkCell />
                </tr>
              </tbody>
            </Grid>
          </GridArea>
          <VScroll>
            <ScrollButton aria-label="Scroll table up"><Icon name="up" /></ScrollButton>
            <Thumb $size={115} />
            <Filler />
            <ScrollButton aria-label="Scroll table down"><Icon name="down" /></ScrollButton>
          </VScroll>
        </GridFrame>
        <NavBar>
          <Tools items={['first', 'prev']} />
          <RecordInput aria-label="Record number" defaultValue="1" />
          <Tools items={['next', 'last', '|', 'showAll', 'showSel', '|']} active="showAll" />
          <SelectedCount>(0 out of 62 Selected)</SelectedCount>
        </NavBar>
        <TabRow><SheetTab>Points</SheetTab></TabRow>
      </TableWindow>

      <Scribble width="364" height="36" viewBox="0 0 364 36" aria-hidden="true">
        <path d="M4 36L10 9 25 7V3l10-2h98l9 2 142-1 14 6-4 8H200v20z" fill="#333" />
        <path d="M10 36V15l4-5 46-5 70-1 70 3 65 2v6h84v9l5 4h10v7h-99v1z" fill="#000" />
      </Scribble>
      <Meter><MeterScale /></Meter>
    </Shell>
  );
}
